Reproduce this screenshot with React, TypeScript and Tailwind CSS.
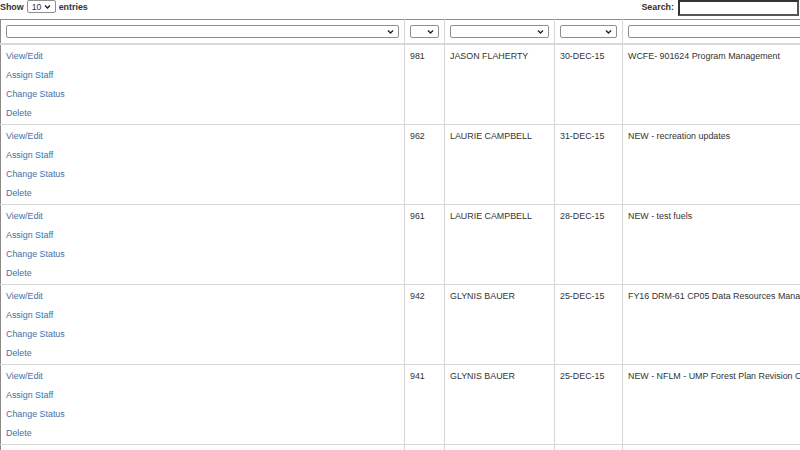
import React from "react";

type Row = { id: number; name: string; date: string; title: string };

const rows: Row[] = [
  { id: 981, name: "JASON FLAHERTY", date: "30-DEC-15", title: "WCFE- 901624 Program Management" },
  { id: 962, name: "LAURIE CAMPBELL", date: "31-DEC-15", title: "NEW - recreation updates" },
  { id: 961, name: "LAURIE CAMPBELL", date: "28-DEC-15", title: "NEW - test fuels" },
  { id: 942, name: "GLYNIS BAUER", date: "25-DEC-15", title: "FY16 DRM-61 CP05 Data Resources Management" },
  { id: 941, name: "GLYNIS BAUER", date: "25-DEC-15", title: "NEW - NFLM - UMP Forest Plan Revision Coordination" },
  { id: 940, name: "GLYNIS BAUER", date: "24-DEC-15", title: "NEW - NFLM - Forest Plan Monitoring" },
];

const actions = ["View/Edit", "Assign Staff", "Change Status", "Delete"];

function Chevron() {
  return (
    <svg width="7" height="5" viewBox="0 0 7 5" className="pointer-events-none absolute right-[5px] top-1/2 -translate-y-1/2">
      <path d="M1 1 L3.5 3.5 L6 1" fill="none" stroke="#222" strokeWidth="1.4" />
    </svg>
  );
}

function FilterSelect({ arrow = true }: { arrow?: boolean }) {
  return (
    <div className="relative h-[13px] w-full">
      <select className="block h-full w-full appearance-none rounded-[2px] border border-[#8f8f8f] bg-white text-[8px]">
        <option value=""></option>
      </select>
      {arrow && <Chevron />}
    </div>
  );
}

export default function App() {
  return (
    <div className="h-[450px] w-[800px] overflow-hidden bg-white text-[8.9px] text-[#333] [font-family:'Liberation_Sans',Arial,sans-serif]">
      {/* Top controls */}
      <div className="flex h-[19px] items-start justify-between">
        <label className="flex items-center gap-[3px] font-bold leading-[12px]">
          Show
          <span className="relative inline-block h-[13px] w-[29px]">
            <select className="block h-full w-full appearance-none rounded-[2px] border border-[#8f8f8f] bg-white pl-[4px] text-[8.7px] font-normal">
              <option>10</option>
              <option>25</option>
              <option>50</option>
              <option>100</option>
            </select>
            <Chevron />
          </span>
          entries
        </label>
        <label className="flex items-center gap-[4px] font-bold">
          Search:
          <input
            type="search"
            className="mr-[1px] h-[16px] w-[121px] border-2 border-t-[#333] border-l-[#333] border-r-[#555] border-b-[#555] bg-white"
          />
        </label>
      </div>

      {/* Table */}
      <table className="w-[1000px] table-fixed border-collapse border-t border-l border-t-[#8a8a8a] border-l-[#8a8a8a]">
        <colgroup>
          <col className="w-[404px]" />
          <col className="w-[40px]" />
          <col className="w-[110px]" />
          <col className="w-[68px]" />
          <col className="w-[378px]" />
        </colgroup>
        <thead>
          <tr className="h-[24px] border-b-2 border-b-[#d8d8d8]">
            <th className="border-r border-r-[#d6d6d6] px-[5px] pt-[5px] pb-[5px] align-top">
              <FilterSelect />
            </th>
            <th className="border-r border-r-[#d6d6d6] px-[5px] pt-[5px] pb-[5px] align-top">
              <FilterSelect />
            </th>
            <th className="border-r border-r-[#d6d6d6] px-[5px] pt-[5px] pb-[5px] align-top">
              <FilterSelect />
            </th>
            <th className="border-r border-r-[#d6d6d6] px-[5px] pt-[5px] pb-[5px] align-top">
              <FilterSelect />
            </th>
            <th className="px-[5px] pt-[5px] pb-[5px] align-top">
              <FilterSelect arrow={false} />
            </th>
          </tr>
        </thead>
        <tbody>
          {rows.map((r) => (
            <tr key={r.id} className="h-[80px] border-b border-b-[#d8d8d8] align-top">
              <td className="border-r border-r-[#d6d6d6] px-[5px] pt-[2px]">
                {actions.map((a) => (
                  <a key={a} href="#" className="block leading-[19px] text-[#3d72a6]">
                    {a}
                  </a>
                ))}
              </td>
              <td className="border-r border-r-[#d6d6d6] px-[5px] pt-[2px] leading-[19px]">{r.id}</td>
              <td className="border-r border-r-[#d6d6d6] px-[5px] pt-[2px] leading-[19px]">{r.name}</td>
              <td className="border-r border-r-[#d6d6d6] px-[5px] pt-[2px] leading-[19px]">{r.date}</td>
              <td className="whitespace-nowrap px-[5px] pt-[2px] leading-[19px]">{r.title}</td>
            </tr>
          ))}
        </tbody>
      </table>
    </div>
  );
}
